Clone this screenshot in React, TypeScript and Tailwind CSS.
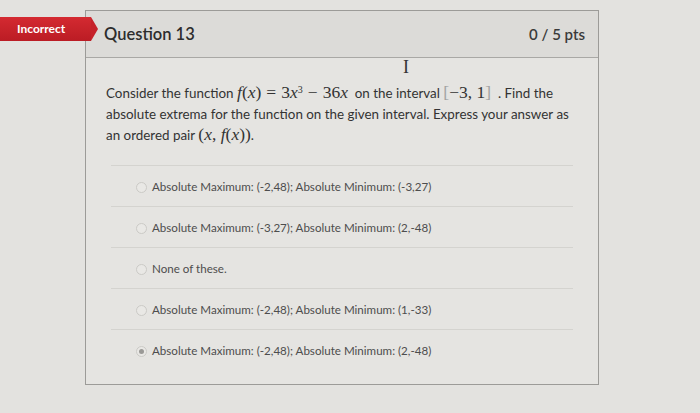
import React from "react";

const options = [
  { label: "Absolute Maximum: (-2,48); Absolute Minimum: (-3,27)", checked: false },
  { label: "Absolute Maximum: (-3,27); Absolute Minimum: (2,-48)", checked: false },
  { label: "None of these.", checked: false },
  { label: "Absolute Maximum: (-2,48); Absolute Minimum: (1,-33)", checked: false },
  { label: "Absolute Maximum: (-2,48); Absolute Minimum: (2,-48)", checked: true },
];

function Radio({ checked }: { checked: boolean }) {
  return (
    <span className="w-[11px] h-[11px] rounded-full border border-[#cbcac6] bg-[#e9e8e5] flex items-center justify-center shrink-0">
      {checked && <span className="w-[5px] h-[5px] rounded-full bg-[#9a9996]" />}
    </span>
  );
}

const M = ({ children }: { children: React.ReactNode }) => (
  <span className="font-['Liberation_Serif',serif] text-[17.5px] leading-none">{children}</span>
);

const Op = ({ children }: { children: React.ReactNode }) => <span className="mx-[5px]">{children}</span>;

export default function App() {
  return (
    <div className="relative w-[700px] h-[413px] bg-[#e3e2df] overflow-hidden font-['Lato',sans-serif]">
      {/* Incorrect badge */}
      <div className="absolute left-0 top-[17px] h-[24px] flex z-10">
        <div className="w-[91px] bg-gradient-to-b from-[#d42a31] to-[#bb1c24] text-white text-[12px] font-bold flex items-center pl-[17px]">
          Incorrect
        </div>
        <div className="w-0 h-0 border-y-[12px] border-y-transparent border-l-[7px] border-l-[#c6222a]" />
      </div>

      {/* I-beam cursor */}
      <div className="absolute left-[403px] top-[58px] text-[#333] text-[18px] font-['Liberation_Serif',serif] leading-none">
        I
      </div>

      <div className="ml-[85px] mt-[10px] w-[514px] h-[375px] border border-[#9c9b98] bg-[#e5e4e1] flex flex-col">
        <div className="h-[47px] shrink-0 bg-[#dcdbd8] border-b border-[#a9a8a5] flex items-center justify-between pl-[18px] pr-[13px]">
          <span className="text-[16.5px] font-semibold text-[#2d2d2d]">Question 13</span>
          <span className="text-[15px] font-semibold text-[#3a3a3a]">0 / 5 pts</span>
        </div>

        <div className="pl-[20px] pr-[14px] pt-[25px] text-[13.4px] leading-[21px] text-[#333]">
          <p>
            Consider the function{" "}
            <M>
              <i>f</i>(<i>x</i>)<Op>=</Op>3<i>x</i>
              <sup className="text-[10px] leading-none">3</sup>
              <Op>−</Op>36<i>x</i>
            </M>
            &nbsp; on the interval{" "}
            <M>
              <span className="text-[#a3a3a3]">[</span>−3, 1<span className="text-[#a3a3a3]">]</span>
            </M>
            &nbsp; . Find the absolute extrema for the function on the given interval. Express your answer as an
            ordered pair{" "}
            <M>
              (<i>x</i>, <i>f</i>(<i>x</i>))
            </M>
            .
          </p>
        </div>

        <div className="mx-[25px] mt-[19px] flex flex-col">
          {options.map((o, i) => (
            <div
              key={i}
              className="h-[41px] border-t border-[#d4d3cf] flex items-center gap-[5px] pl-[25px] pt-[2px] text-[11.6px] text-[#4d4d4d]"
            >
              <Radio checked={o.checked} />
              <span>{o.label}</span>
            </div>
          ))}
        </div>
      </div>
    </div>
  );
}
